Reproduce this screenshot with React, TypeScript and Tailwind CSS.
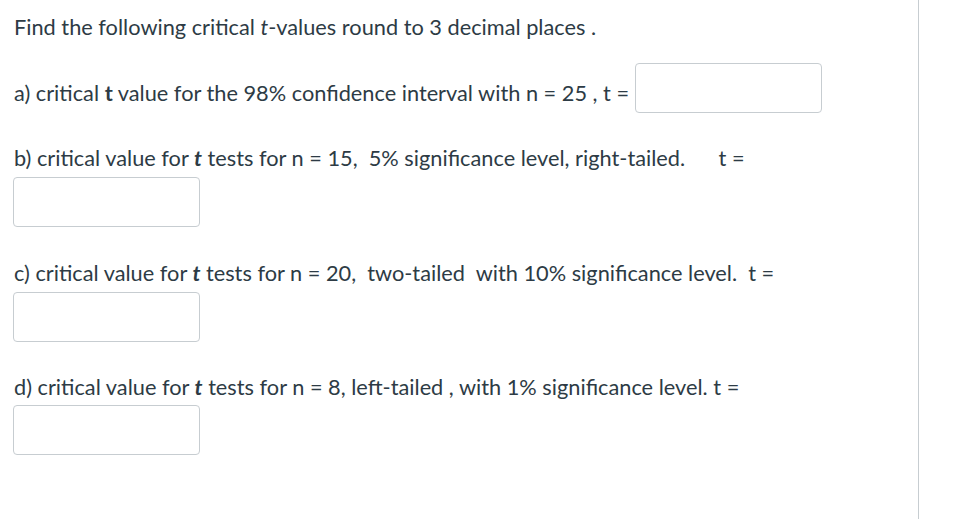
import React from 'react';

function AnswerBox({ className = '' }: { className?: string }) {
  return (
    <input
      type="text"
      className={`block w-[187px] h-[50px] rounded-[4px] border border-[#c7cdd1] bg-white outline-none ${className}`}
    />
  );
}

export default function App() {
  return (
    <div className="min-h-screen bg-white text-[#2d3b45] font-['Lato',sans-serif] text-[21.75px] leading-[30px]">
      <div className="w-[919px] min-h-[519px] border-r border-[#c7cdd1] pl-[14px] pt-[12px]">
        <p>
          Find the following critical <i>t</i>-values round to 3 decimal places .
        </p>

        {/* a */}
        <div className="mt-[21px] flex items-start whitespace-pre">
          <span className="mt-[15px]">a) critical <b>t</b> value for the 98% confidence interval with n = 25 , t = </span>
          <AnswerBox />
        </div>

        {/* b */}
        <div className="mt-[30px]">
          <p className="whitespace-pre">
            b) critical value for <b><i>t</i></b> tests for n = 15,  5% significance level, right-tailed.      t =
          </p>
          <AnswerBox className="mt-[4px] -ml-px" />
        </div>

        {/* c */}
        <div className="mt-[31px]">
          <p className="whitespace-pre">
            c) critical value for <b><i>t</i></b> tests for n = 20,  two-tailed  with 10% significance level.  t =
          </p>
          <AnswerBox className="mt-[4px] -ml-px" />
        </div>

        {/* d */}
        <div className="mt-[30px]">
          <p className="whitespace-pre">
            d) critical value for <b><i>t</i></b> tests for n = 8, left-tailed , with 1% significance level. t =
          </p>
          <AnswerBox className="mt-[3px] -ml-px" />
        </div>
      </div>
    </div>
  );
}
